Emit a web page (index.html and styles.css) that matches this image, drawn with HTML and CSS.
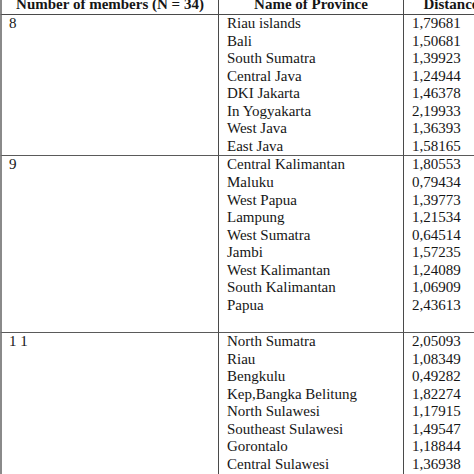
FILE: index.html
```html
<!DOCTYPE html>
<html>
<head>
<meta charset="utf-8">
<link rel="stylesheet" href="styles.css">
</head>
<body>
<div class="frame">
<table class="grid">
  <thead>
    <tr>
      <th class="c1">Number of members (N = 34)</th>
      <th class="c2">Name of Province</th>
      <th class="c3">Distance</th>
    </tr>
  </thead>
  <tbody>
    <tr>
      <td class="c1">8</td>
      <td class="c2">
        <div>Riau islands</div><div>Bali</div><div>South Sumatra</div><div>Central Java</div><div>DKI Jakarta</div><div>In Yogyakarta</div><div>West Java</div><div>East Java</div>
      </td>
      <td class="c3">
        <div>1,79681</div><div>1,50681</div><div>1,39923</div><div>1,24944</div><div>1,46378</div><div>2,19933</div><div>1,36393</div><div>1,58165</div>
      </td>
    </tr>
    <tr>
      <td class="c1">9</td>
      <td class="c2">
        <div>Central Kalimantan</div><div>Maluku</div><div>West Papua</div><div>Lampung</div><div>West Sumatra</div><div>Jambi</div><div>West Kalimantan</div><div>South Kalimantan</div><div>Papua</div><div class="blank"></div>
      </td>
      <td class="c3">
        <div>1,80553</div><div>0,79434</div><div>1,39773</div><div>1,21534</div><div>0,64514</div><div>1,57235</div><div>1,24089</div><div>1,06909</div><div>2,43613</div><div class="blank"></div>
      </td>
    </tr>
    <tr>
      <td class="c1">1 1</td>
      <td class="c2">
        <div>North Sumatra</div><div>Riau</div><div>Bengkulu</div><div>Kep,Bangka Belitung</div><div>North Sulawesi</div><div>Southeast Sulawesi</div><div>Gorontalo</div><div>Central Sulawesi</div>
      </td>
      <td class="c3">
        <div>2,05093</div><div>1,08349</div><div>0,49282</div><div>1,82274</div><div>1,17915</div><div>1,49547</div><div>1,18844</div><div>1,36938</div>
      </td>
    </tr>
  </tbody>
</table>
</div>
</body>
</html>
```

FILE: styles.css
```css
html, body {
  margin: 0;
  padding: 0;
  background: #ffffff;
  overflow: hidden;
}

.frame {
  width: 474px;
  height: 474px;
  overflow: hidden;
}

.grid {
  margin-top: -3.6px;
  width: 498px;
  table-layout: fixed;
  border-collapse: separate;
  border-spacing: 0;
  font-family: "Liberation Serif", "Times New Roman", serif;
  font-size: 15px;
  line-height: 17.57px;
  color: #161616;
}

.grid th,
.grid td {
  box-sizing: border-box;
  padding: 0 8px;
  vertical-align: top;
  text-align: left;
  border-left: 1px solid #4a4a4a;
  white-space: nowrap;
}

.grid th {
  font-weight: bold;
  text-align: center;
  border-bottom: 1px solid #4a4a4a;
}

.grid tbody tr + tr td {
  border-top: 1px solid #5a5a5a;
}

.grid .c1 {
  width: 218px;
  border-left: 2px solid #8a8a8a;
  padding-left: 7px;
}

.grid th.c1 {
  padding-left: 0;
  padding-right: 0;
}

.grid .c2 {
  width: 185px;
}

.grid .c3 {
  width: 95px;
}

.blank {
  height: 17.57px;
}
```
